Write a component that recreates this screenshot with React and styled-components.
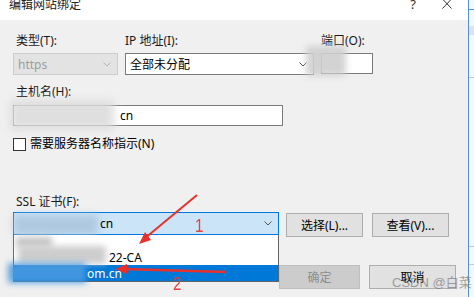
import React from 'react'
import styled, { createGlobalStyle } from 'styled-components'

const GlobalStyle = createGlobalStyle`
    html, body {
        margin: 0;
        padding: 0;
        background: #ffffff;
    }
    body {
        font-family: "Noto Sans", "Noto Sans CJK SC", sans-serif;
        font-size: 12px;
        color: #000;
    }
`

const Screen = styled.div`
    display: flex;
    width: 474px;
    height: 297px;
    overflow: hidden;
    position: relative;
`

const Dialog = styled.div`
    display: flex;
    flex-direction: column;
    width: 469px;
    background: #f0f0f0;
`

const TitleBar = styled.div`
    display: flex;
    align-items: flex-start;
    height: 20px;
    background: #ffffff;
    padding-left: 9px;
    overflow: hidden;
`

const Title = styled.div`
    flex: 1;
    font-size: 12px;
    line-height: 14px;
    margin-top: -2px;
    color: #222;
`

const TitleButton = styled.div`
    width: ${props => props.w}px;
    display: flex;
    justify-content: center;
    margin-top: -3px;
    font-size: ${props => props.size}px;
    line-height: 14px;
    color: #333;
    svg {
        margin-top: 2px;
    }
`

const Body = styled.div`
    flex: 1;
    padding: 14px 12px 0 13px;
    position: relative;
`

const FieldGrid = styled.div`
    display: grid;
    grid-template-columns: 105px 189px 52px;
    column-gap: 7px;
`

const Field = styled.div`
    display: flex;
    flex-direction: column;
    gap: ${props => props.gap || 5}px;
`

const Label = styled.div`
    line-height: 14px;
    padding-left: ${props => props.pad ?? 3}px;
    color: #1a1a1a;
    white-space: nowrap;
`

const Combo = styled.div`
    position: relative;
    display: flex;
    align-items: center;
    justify-content: space-between;
    box-sizing: border-box;
    height: ${props => props.h || 22}px;
    width: ${props => props.w ? props.w + 'px' : 'auto'};
    padding: 0 6px 0 4px;
    background: ${props => props.disabled ? '#e3e3e3' : props.open ? '#cce4f7' : '#ffffff'};
    border: 1px solid ${props => props.disabled ? '#cccccc' : props.open ? '#0078d7' : '#7a7a7a'};
    color: ${props => props.disabled ? '#9d9d9d' : '#000'};
`

const TextBox = styled.div`
    position: relative;
    box-sizing: border-box;
    height: 21px;
    width: ${props => props.w}px;
    display: flex;
    align-items: center;
    padding-left: 4px;
    background: #ffffff;
    border: 1px solid #7a7a7a;
`

const ValueText = styled.span`
    position: relative;
    margin-left: ${props => props.indent || 0}px;
    color: ${props => props.color || 'inherit'};
    z-index: 4;
`

const Smudge = styled.div`
    position: absolute;
    left: ${props => props.x}px;
    top: ${props => props.y}px;
    width: ${props => props.w}px;
    height: ${props => props.h}px;
    background: ${props => props.c};
    filter: blur(${props => props.b || 3}px);
    opacity: ${props => props.o || 0.9};
    z-index: 3;
    pointer-events: none;
`

const CheckRow = styled.label`
    display: flex;
    align-items: center;
    gap: 4px;
    margin-top: 11px;
    line-height: 14px;
`

const CheckBox = styled.span`
    width: 11px;
    height: 11px;
    border: 1px solid #333;
    background: #fff;
`

const SslBlock = styled.div`
    margin-top: 44px;
`

const SslRow = styled.div`
    display: flex;
    align-items: flex-start;
    gap: 7px;
    margin-top: 3px;
`

const ButtonGroup = styled.div`
    display: flex;
    gap: 9px;
    margin-top: 1px;
`

const Button = styled.div`
    box-sizing: border-box;
    width: ${props => props.w}px;
    height: 24px;
    display: flex;
    align-items: center;
    justify-content: center;
    background: ${props => props.disabled ? '#cccccc' : '#e1e1e1'};
    border: 1px solid ${props => props.disabled ? '#bfbfbf' : '#adadad'};
    color: ${props => props.disabled ? '#8d8d8d' : '#000'};
`

const ComboWrap = styled.div`
    position: relative;
`

const DropList = styled.div`
    position: absolute;
    left: 0;
    top: 100%;
    width: 266px;
    box-sizing: border-box;
    background: #ffffff;
    border: 1px solid #646464;
    border-top: none;
    z-index: 5;
`

const DropItem = styled.div`
    position: relative;
    height: ${props => props.h}px;
    display: flex;
    align-items: center;
    padding-left: 4px;
    background: ${props => props.selected ? '#0078d7' : '#ffffff'};
    color: ${props => props.selected ? '#ffffff' : '#000'};
`

const Footer = styled.div`
    display: flex;
    justify-content: flex-end;
    gap: 9px;
    margin-top: 28px;
`

const RightStrip = styled.div`
    width: 5px;
    display: flex;
    flex-direction: column;
    background: #f7f7f7;
    border-left: 1px solid #4b92d6;
`

const StripLine = styled.div`
    height: ${props => props.h || 1}px;
    margin-top: ${props => props.gap}px;
    background: ${props => props.c || '#c8c8c8'};
`

const Annotations = styled.svg`
    position: absolute;
    left: 0;
    top: 0;
    width: 474px;
    height: 297px;
    pointer-events: none;
    z-index: 10;
`

const Mark = styled.div`
    position: absolute;
    left: ${props => props.x}px;
    top: ${props => props.y}px;
    font-family: "Liberation Sans", sans-serif;
    font-size: 19px;
    line-height: 19px;
    color: #e8403c;
    z-index: 10;
    transform: scaleX(0.8);
`

const Watermark = styled.div`
    position: absolute;
    left: 392px;
    top: 272px;
    font-family: "Liberation Sans", "Noto Sans CJK SC", sans-serif;
    font-size: 13px;
    color: rgba(120, 120, 120, 0.7);
    z-index: 11;
`

const Chevron = ({ color = '#555' }) => (
    <svg width="8" height="5" viewBox="0 0 8 5">
        <path d="M0.5 0.5 L4 4 L7.5 0.5" fill="none" stroke={color} strokeWidth="1" />
    </svg>
)

const App = () => {
    return (
        <Screen>
            <GlobalStyle />
            <Dialog>
                <TitleBar>
                    <Title>编辑网站绑定</Title>
                    <TitleButton w={26} size={13}>?</TitleButton>
                    <TitleButton w={42} size={13}>
                        <svg width="10" height="10" viewBox="0 0 10 10">
                            <path d="M0.5 0 L9.5 9.5 M9.5 0 L0.5 9.5" stroke="#333" strokeWidth="1" />
                        </svg>
                    </TitleButton>
                </TitleBar>
                <Body>
                    <FieldGrid>
                        <Field>
                            <Label>类型(T):</Label>
                            <Combo disabled h={22}>
                                <span>https</span>
                                <Chevron color="#b5b5b5" />
                            </Combo>
                        </Field>
                        <Field>
                            <Label pad={0}>IP 地址(I):</Label>
                            <Combo h={22}>
                                <span>全部未分配</span>
                                <Chevron color="#444" />
                            </Combo>
                        </Field>
                        <Field>
                            <Label pad={0}>端口(O):</Label>
                            <TextBox w={52}>
                                <Smudge x={-16} y={-8} w={40} h={30} c="#cfcfcf" b={3} />
                            </TextBox>
                        </Field>
                    </FieldGrid>

                    <Field gap={6} style={{ marginTop: 10 }}>
                        <Label>主机名(H):</Label>
                        <TextBox w={270}>
                            <Smudge x={-4} y={-6} w={104} h={30} c="#dcdcdc" b={4} />
                            <ValueText indent={102}>cn</ValueText>
                        </TextBox>
                    </Field>

                    <CheckRow>
                        <CheckBox />
                        <span>需要服务器名称指示(N)</span>
                    </CheckRow>

                    <SslBlock>
                        <Label>SSL 证书(F):</Label>
                        <SslRow>
                            <ComboWrap>
                                <Combo open w={266} h={23}>
                                    <Smudge x={0} y={2} w={84} h={20} c="#a8c4dc" b={4} o={0.85} />
                                    <ValueText indent={82}>cn</ValueText>
                                    <Chevron color="#555" />
                                </Combo>
                                <DropList>
                                    <DropItem h={15}>
                                        <Smudge x={2} y={2} w={36} h={10} c="#bdbdbd" b={3} />
                                    </DropItem>
                                    <DropItem h={15}>
                                        <Smudge x={4} y={-4} w={88} h={18} c="#c8c8c8" b={3} />
                                        <ValueText indent={91}>22-CA</ValueText>
                                    </DropItem>
                                    <DropItem selected h={16}>
                                        <Smudge x={-6} y={-2} w={78} h={20} c="#4a9ae0" b={3} />
                                        <ValueText indent={69}>om.cn</ValueText>
                                    </DropItem>
                                </DropList>
                            </ComboWrap>
                            <ButtonGroup>
                                <Button w={77}>选择(L)...</Button>
                                <Button w={77}>查看(V)...</Button>
                            </ButtonGroup>
                        </SslRow>
                    </SslBlock>

                    <Footer>
                        <Button disabled w={81}>确定</Button>
                        <Button w={87}>取消</Button>
                    </Footer>
                </Body>
            </Dialog>
            <RightStrip>
                <StripLine gap={9} h={1} c="#4b92d6" />
                <StripLine gap={16} h={9} c="#e2e2e2" />
                <StripLine gap={42} />
                <StripLine gap={168} />
                <StripLine gap={17} />
            </RightStrip>

            <Annotations viewBox="0 0 474 297">
                <line x1="197" y1="195" x2="144" y2="239" stroke="#e8312d" strokeWidth="2" />
                <path d="M139 244 L145 232 L151 240 Z" fill="#e8312d" />
                <line x1="226" y1="272" x2="122" y2="269" stroke="#e8312d" strokeWidth="2.5" />
                <path d="M115 269 L127 264 L127 274 Z" fill="#e8312d" />
            </Annotations>
            <Mark x={194} y={216}>1</Mark>
            <Mark x={172} y={274}>2</Mark>
            <Watermark>CSDN @白菜</Watermark>
        </Screen>
    )
}

export default App
